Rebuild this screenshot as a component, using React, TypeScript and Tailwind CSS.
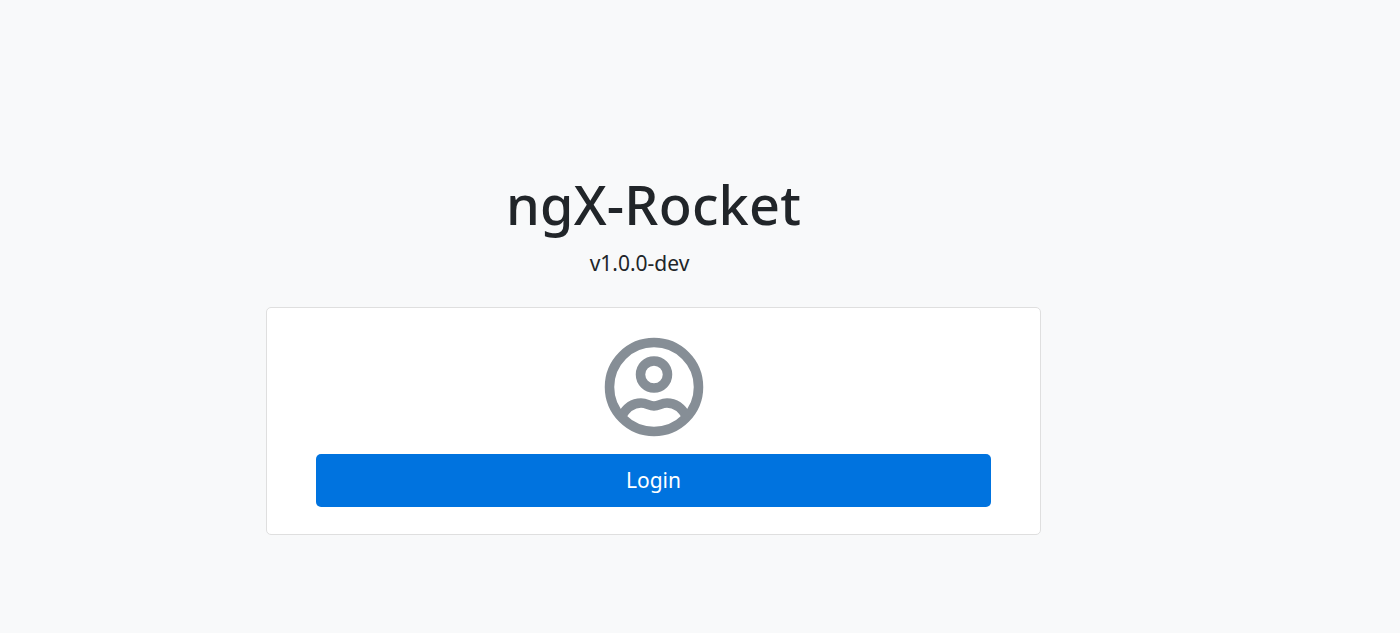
export default function App() {
  return (
    <div className="min-h-[633px] bg-[#f8f9fa] pt-[171px] font-['Noto_Sans','Open_Sans',sans-serif]">
      <div className="ml-[266px] w-[775px]">
        <h1 className="text-center text-[54px] leading-[66px] font-medium tracking-[0.2px] text-[#212529]">ngX-Rocket</h1>
        <div className="mt-[12px] pr-[28px] text-center text-[21px] leading-[28px] text-[#212529]">v1.0.0-dev</div>

        {/* login card */}
        <div className="mt-[30px] h-[228px] rounded-[5px] border border-[#dfdfdf] bg-white px-[49px] pt-[29px]">
          <div className="flex justify-center">
            <svg width="100" height="100" viewBox="0 0 100 100" fill="none" stroke="#868e96" strokeWidth="9.5">
              <circle cx="50" cy="50" r="44.5" />
              <circle cx="50" cy="37.5" r="13.5" />
              <path d="M17 80 C22 71 29 66 37 66 C43 66 45 69 50 69 C55 69 57 66 63 66 C71 66 78 71 83 80" />
            </svg>
          </div>
          <button className="mt-[17px] block h-[53px] w-full rounded-[5px] bg-[#0073df] text-[21px] text-white">Login</button>
        </div>
      </div>
    </div>
  );
}
